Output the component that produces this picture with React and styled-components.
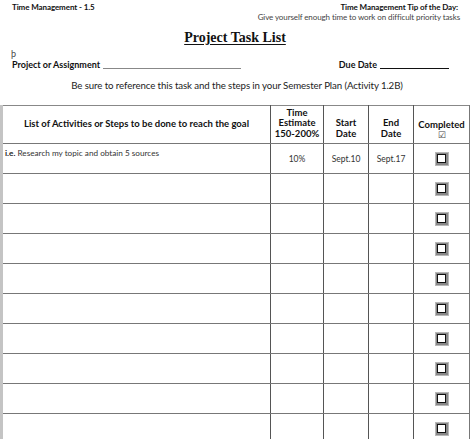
import React from "react";
import styled, { createGlobalStyle } from "styled-components";

const GlobalStyle = createGlobalStyle`
  html, body {
    margin: 0;
    padding: 0;
    background: #fff;
  }
  body {
    font-family: Lato, "Open Sans", "Liberation Sans", sans-serif;
    color: #111;
    width: 474px;
    height: 439px;
    overflow: hidden;
  }
`;

const rows = [
  { task: "Research my topic and obtain 5 sources", est: "10%", start: "Sept.10", end: "Sept.17", example: true },
  {}, {}, {}, {}, {}, {}, {}, {}, {},
];

export default function App() {
  return (
    <Page>
      <GlobalStyle />
      <TopBar>
        <Label>Time Management - 1.5</Label>
        <Tip>
          <Label>Time Management Tip of the Day:</Label>
          <TipText>Give yourself enough time to work on difficult priority tasks</TipText>
        </Tip>
      </TopBar>

      <Title>Project Task List</Title>
      <Thorn>þ</Thorn>

      <FieldRow>
        <Field>
          <FieldLabel>Project or Assignment</FieldLabel>
          <Blank width={138} />
        </Field>
        <Field>
          <FieldLabel>Due Date</FieldLabel>
          <Blank width={69} dark />
        </Field>
      </FieldRow>

      <Note>Be sure to reference this task and the steps in your Semester Plan (Activity 1.2B)</Note>

      <Table>
        <colgroup>
          <col style={{ width: 269 }} />
          <col style={{ width: 53 }} />
          <col style={{ width: 45 }} />
          <col style={{ width: 45 }} />
          <col style={{ width: 56 }} />
        </colgroup>
        <thead>
          <tr>
            <Head first>List of Activities or Steps to be done to reach the goal</Head>
            <Head>
              Time
              <br />
              Estimate
              <br />
              150-200%
            </Head>
            <Head>
              Start
              <br />
              Date
            </Head>
            <Head>
              End
              <br />
              Date
            </Head>
            <Head>
              Completed
              <Tick>☑</Tick>
            </Head>
          </tr>
        </thead>
        <tbody>
          {rows.map((r, i) => (
            <tr key={i}>
              <TaskCell>
                {r.example && (
                  <>
                    <b>i.e.</b> {r.task}
                  </>
                )}
              </TaskCell>
              <Cell>{r.est}</Cell>
              <Cell>{r.start}</Cell>
              <Cell>{r.end}</Cell>
              <Cell>
                <Box />
              </Cell>
            </tr>
          ))}
        </tbody>
      </Table>
    </Page>
  );
}

const Page = styled.div`
  width: 474px;
  height: 439px;
  overflow: hidden;
`;

const TopBar = styled.div`
  display: flex;
  justify-content: space-between;
  align-items: flex-start;
  padding: 2px 16px 0 12px;
`;

const Label = styled.div`
  font-size: 8px;
  font-weight: 700;
  line-height: 10px;
  letter-spacing: -0.1px;
`;

const Tip = styled.div`
  display: flex;
  flex-direction: column;
  align-items: flex-end;
`;

const TipText = styled.div`
  font-size: 8px;
  line-height: 11px;
  color: #444;
  letter-spacing: -0.1px;
  margin-right: -2px;
`;

const Title = styled.div`
  margin-top: 7px;
  text-align: center;
  font-family: "Liberation Serif", "DejaVu Serif", serif;
  font-weight: 700;
  font-size: 14px;
  line-height: 16px;
  text-decoration: underline;
  text-underline-offset: 2px;
  padding-right: 4px;
`;

const Thorn = styled.div`
  margin: 3px 0 0 11px;
  font-size: 9px;
  line-height: 9px;
  color: #444;
`;

const FieldRow = styled.div`
  display: flex;
  justify-content: space-between;
  padding: 1px 25px 0 12px;
`;

const Field = styled.div`
  display: flex;
  align-items: flex-end;
  gap: 3px;
`;

const FieldLabel = styled.span`
  font-size: 9px;
  font-weight: 700;
  line-height: 12px;
`;

const Blank = styled.span`
  width: ${(p) => p.width}px;
  border-bottom: ${(p) => (p.dark ? "1.5px solid #111" : "1px solid #888")};
  margin-bottom: 2px;
`;

const Note = styled.div`
  margin-top: 8px;
  text-align: center;
  font-size: 9.7px;
  line-height: 12px;
  color: #222;
  letter-spacing: -0.1px;
`;

const Table = styled.table`
  margin: 14px 0 0 0;
  width: 468px;
  table-layout: fixed;
  border-collapse: collapse;
  border-left: 3px solid #c4c4c4;
  border-right: 1px solid #777;
  border-top: 1px solid #888;
`;

const Head = styled.th`
  height: ${(p) => (p.first ? "37px" : "33px")};
  padding: ${(p) => (p.first ? "0" : "0 0 4px")};
  font-size: 9.5px;
  font-weight: 700;
  line-height: 10.5px;
  text-align: center;
  vertical-align: ${(p) => (p.first ? "middle" : "bottom")};
  color: #111;
  border-left: ${(p) => (p.first ? "none" : "1px solid #555")};
  border-bottom: 1px solid #777;
`;

const Tick = styled.span`
  display: block;
  height: 9px;
  font-size: 9px;
  line-height: 9px;
  font-weight: 400;
  color: #444;
`;

const Cell = styled.td`
  height: 29px;
  padding: 0;
  font-size: 8.5px;
  text-align: center;
  vertical-align: middle;
  border-left: 1px solid #555;
  border-bottom: 1px solid #777;
  color: #333;
`;

const TaskCell = styled(Cell)`
  text-align: left;
  vertical-align: top;
  padding: 4px 0 0 2px;
  height: 25px;
  border-left: none;
  font-size: 8.2px;

  b {
    color: #222;
  }
`;

const Box = styled.span`
  display: inline-block;
  width: 14px;
  height: 14px;
  box-sizing: border-box;
  background: #888;
  border: 1px solid #b8b8b8;
  padding: 1.5px;
  vertical-align: middle;

  &::after {
    content: "";
    display: block;
    width: 100%;
    height: 100%;
    box-sizing: border-box;
    background: #fff;
    border: 1.5px solid #111;
  }
`;
